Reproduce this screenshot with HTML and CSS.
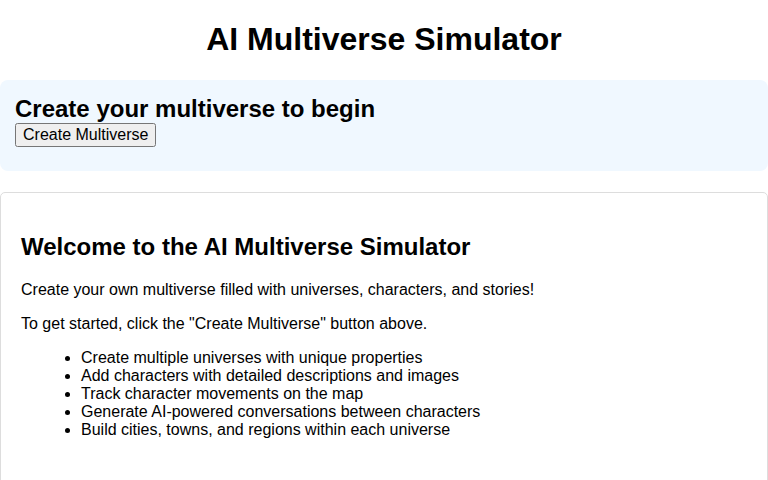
FILE: index.html
```
<!DOCTYPE html>
<html>
<head>
<meta charset="utf-8">
<link rel="stylesheet" href="styles.css">
</head>
<body>
<h1 class="title">AI Multiverse Simulator</h1>
<div class="setup">
  <h2 class="setup-title">Create your multiverse to begin</h2>
  <button class="btn">Create Multiverse</button>
</div>
<div class="card">
  <h2 class="card-title">Welcome to the AI Multiverse Simulator</h2>
  <p>Create your own multiverse filled with universes, characters, and stories!</p>
  <p>To get started, click the "Create Multiverse" button above.</p>
  <ul class="features">
    <li>Create multiple universes with unique properties</li>
    <li>Add characters with detailed descriptions and images</li>
    <li>Track character movements on the map</li>
    <li>Generate AI-powered conversations between characters</li>
    <li>Build cities, towns, and regions within each universe</li>
  </ul>
</div>
</body>
</html>
```
FILE: styles.css
```
html, body {
  margin: 0;
  padding: 0;
  background: #fff;
  color: #000;
  font-family: "Liberation Sans", Arial, sans-serif;
}
.title {
  text-align: center;
  font-size: 32px;
  margin: 0.67em 0;
}
.setup {
  background: #f0f8ff;
  border-radius: 8px;
  padding: 15px 15px 24px;
}
.setup-title {
  font-size: 24px;
  margin: 0;
}
.btn {
  font-family: "Liberation Sans", Arial, sans-serif;
  font-size: 16px;
  padding: 1px 6px;
  margin: 0;
}
.card {
  margin-top: 21px;
  border: 1px solid #ddd;
  border-radius: 5px;
  padding: 20px;
  min-height: 300px;
}
.card-title {
  font-size: 24px;
  margin: 20px 0;
}
.card p {
  font-size: 16px;
  margin: 16px 0;
}
.features {
  padding-left: 60px;
  margin: 16px 0;
}
```
